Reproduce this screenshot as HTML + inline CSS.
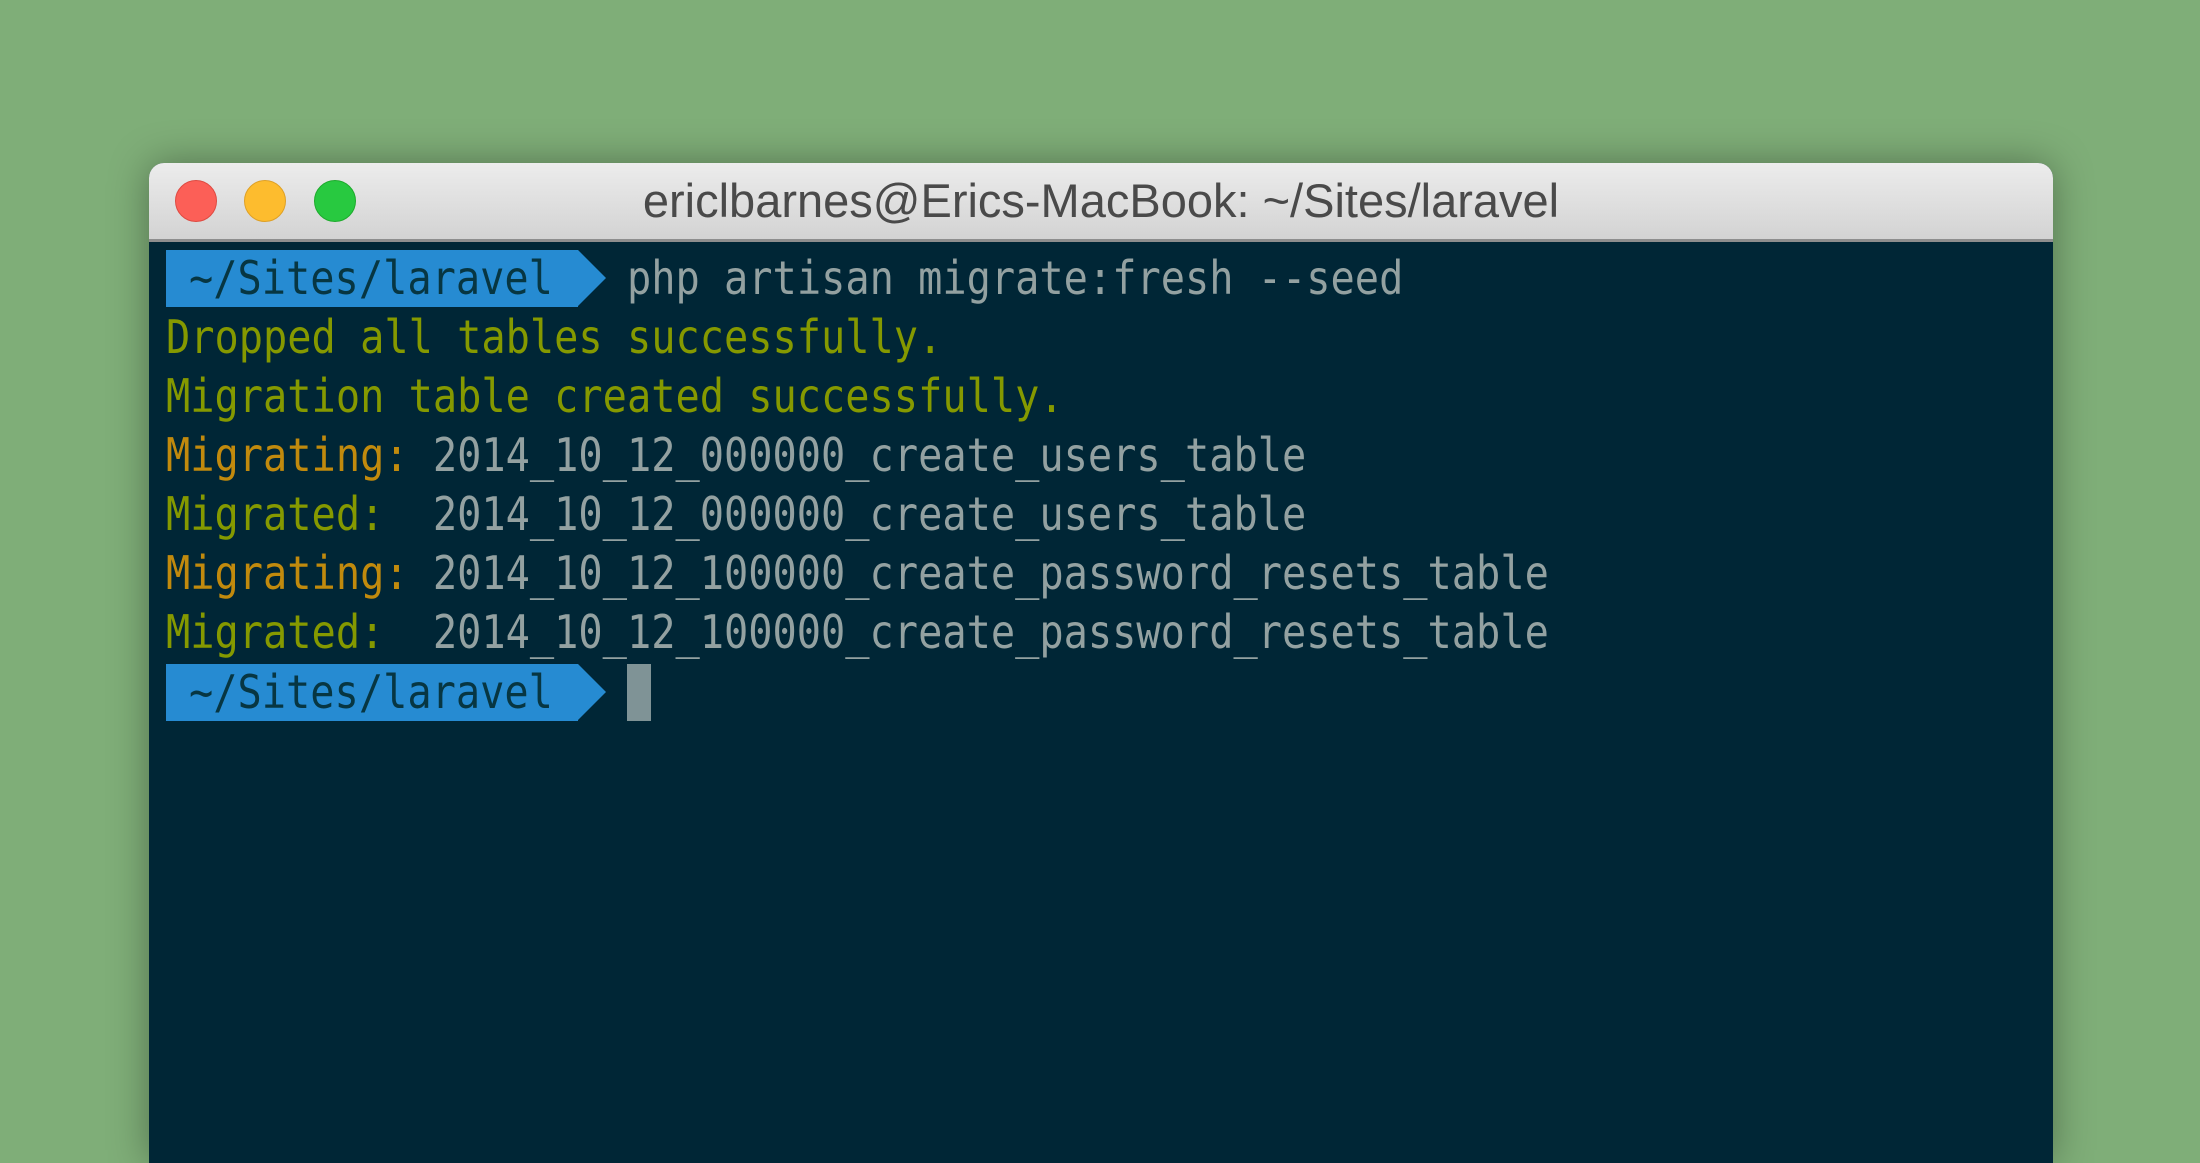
<!DOCTYPE html>
<html><head><meta charset="utf-8"><style>
html,body{margin:0;padding:0;width:2200px;height:1125px;overflow:hidden;background:#7fae78;}
.win{position:absolute;left:149px;top:163px;width:1904px;height:1000px;border-radius:15px 15px 0 0;background:#002636;box-shadow:0 0 40px rgba(0,0,0,0.35);overflow:hidden;}
.tb{position:absolute;left:0;top:0;width:100%;height:76px;background:linear-gradient(#ececec,#d3d3d3);border-bottom:3px solid #8e8e8e;}
.dot{position:absolute;top:17px;width:40px;height:40px;border-radius:50%;}
.title{position:absolute;left:0;right:0;top:10px;text-align:center;font:47px "Liberation Sans",sans-serif;color:#4a4a4a;}
.ln{position:absolute;left:17px;height:59px;line-height:59px;font:46px "DejaVu Sans Mono",monospace;color:#93a1a1;white-space:pre;transform:scaleX(0.876);transform-origin:0 0;}
.g{color:#859900}.o{color:#c18a0d}
.pr{position:absolute;left:17px;height:57px;width:412px;background:#268bd2;}
.pr:after{content:"";position:absolute;left:412px;top:0;border-left:28px solid #268bd2;border-top:28.5px solid transparent;border-bottom:28.5px solid transparent;}
.pt{position:absolute;left:40px;height:57px;line-height:57px;font:46px "DejaVu Sans Mono",monospace;color:#073642;white-space:pre;transform:scaleX(0.876);transform-origin:0 0;}
</style></head><body>
<div class="win">
 <div class="tb">
  <div class="dot" style="left:26px;background:#fc5f57;border:1px solid #de4a41"></div>
  <div class="dot" style="left:95px;background:#fdbc2e;border:1px solid #dea026"></div>
  <div class="dot" style="left:165px;background:#28c940;border:1px solid #1dab2c"></div>
  <div class="title">ericlbarnes@Erics-MacBook: ~/Sites/laravel</div>
 </div>
 <div class="pr" style="top:87px"></div><div class="pt" style="top:88px">~/Sites/laravel</div>
 <div class="ln" style="top:88px;left:478px">php artisan migrate:fresh --seed</div>
 <div class="ln g" style="top:147px">Dropped all tables successfully.</div>
 <div class="ln g" style="top:206px">Migration table created successfully.</div>
 <div class="ln" style="top:265px"><span class="o">Migrating:</span> 2014_10_12_000000_create_users_table</div>
 <div class="ln" style="top:324px"><span class="g">Migrated:</span>  2014_10_12_000000_create_users_table</div>
 <div class="ln" style="top:383px"><span class="o">Migrating:</span> 2014_10_12_100000_create_password_resets_table</div>
 <div class="ln" style="top:442px"><span class="g">Migrated:</span>  2014_10_12_100000_create_password_resets_table</div>
 <div class="pr" style="top:501px"></div><div class="pt" style="top:502px">~/Sites/laravel</div>
 <div style="position:absolute;left:478px;top:501px;width:24px;height:57px;background:#7f9396"></div>
</div>
</body></html>
